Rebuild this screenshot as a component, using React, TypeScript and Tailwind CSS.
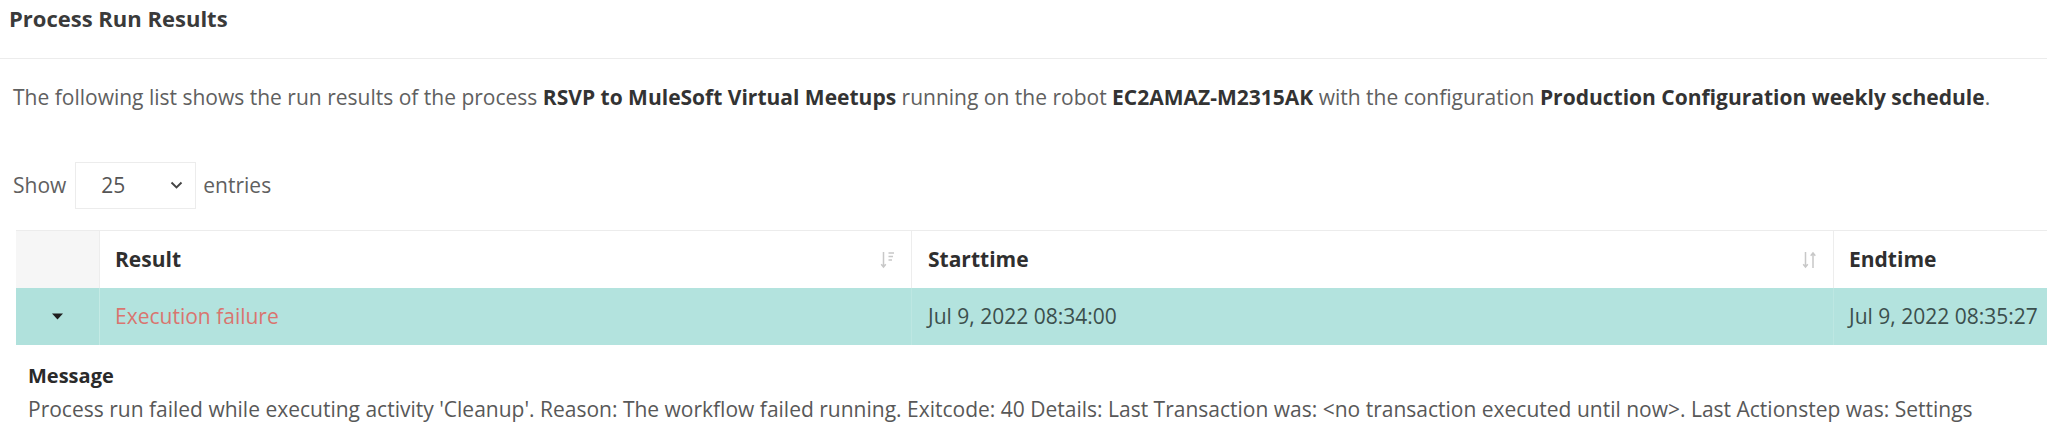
import React from "react";

function SortIconA() {
  return (
    <svg width="15" height="20" viewBox="0 0 15 20" fill="none" stroke="#c8c8c8" strokeWidth="1.5">
      <path d="M3.5 2v15M1.2 14.3 3.5 17l2.3-2.7" />
      <path d="M8.5 3h5.5M8.5 6.5h4.5M8.5 10h3.5" />
    </svg>
  );
}

function SortIconB() {
  return (
    <svg width="15" height="20" viewBox="0 0 15 20" fill="none" stroke="#c8c8c8" strokeWidth="1.5">
      <path d="M3.5 2v15M1.2 14.3 3.5 17l2.3-2.7" />
      <path d="M11 18V3M8.7 5.7 11 3l2.3 2.7" />
    </svg>
  );
}

export default function App() {
  const font = { fontFamily: '"Open Sans", "Noto Sans", sans-serif' };
  return (
    <div className="w-[2047px] h-[433px] overflow-hidden bg-white" style={font}>
      <div className="h-[59px] border-b border-[#ececec] pl-[9px] pt-[3px]">
        <h1 className="text-[22px] font-bold text-[#3a3a3a] leading-[30px]">Process Run Results</h1>
      </div>
      <div className="pl-[13px] mt-[23px] text-[21px] text-[#606060] leading-[30px] whitespace-nowrap">
        The following list shows the run results of the process{" "}
        <b className="font-bold text-[#333]">RSVP to MuleSoft Virtual Meetups</b> running on the robot{" "}
        <b className="font-bold text-[#333]">EC2AMAZ-M2315AK</b> with the configuration{" "}
        <b className="font-bold text-[#333]">Production Configuration weekly schedule</b>.
      </div>
      <div className="flex items-center pl-[13px] mt-[50px] text-[21px] text-[#606060]">
        <span>Show</span>
        <div className="ml-[9px] flex items-center w-[121px] h-[47px] border border-[#ececec] pl-[25px] pr-[12px] justify-between">
          <span className="text-[#555]">25</span>
          <svg width="13" height="9" viewBox="0 0 13 9" fill="none" stroke="#444" strokeWidth="1.9">
            <path d="M1.5 1.5 6.5 6.5l5-5" />
          </svg>
        </div>
        <span className="ml-[7px]">entries</span>
      </div>
      <div className="ml-[16px] mt-[21px]">
        <div className="flex h-[58px] border-t border-[#ececec] text-[21px] font-bold text-[#2f2f2f]">
          <div className="w-[84px] bg-[#f6f6f6] border-r border-[#ededed]" />
          <div className="w-[812px] flex items-center justify-between pl-[15px] pr-[16px] border-r border-[#ededed]">
            <span>Result</span>
            <SortIconA />
          </div>
          <div className="w-[922px] flex items-center justify-between pl-[16px] pr-[16px] border-r border-[#ededed]">
            <span>Starttime</span>
            <SortIconB />
          </div>
          <div className="flex-1 flex items-center pl-[15px]">
            <span>Endtime</span>
          </div>
        </div>
        <div className="flex h-[57px] bg-[#b3e3de] text-[21px] text-[#3b4f4d]">
          <div className="w-[84px] flex items-center justify-center border-r border-[#c4eae5] bg-[#b0e1dc]">
            <svg width="13" height="9" viewBox="0 0 13 9">
              <path d="M1 1.5h11L6.5 7.5z" fill="#1f1f1f" />
            </svg>
          </div>
          <div className="w-[812px] flex items-center pl-[15px] text-[#d9756f] border-r border-[#bde7e2]">
            Execution failure
          </div>
          <div className="w-[922px] flex items-center pl-[16px] border-r border-[#bde7e2]">Jul 9, 2022 08:34:00</div>
          <div className="flex-1 flex items-center pl-[15px]">Jul 9, 2022 08:35:27</div>
        </div>
      </div>
      <div className="pl-[28px] pt-[16px]">
        <div className="text-[20px] font-bold text-[#2a2a2a] leading-[30px]">Message</div>
        <div className="text-[21px] text-[#585858] leading-[30px] mt-[3px] whitespace-nowrap">
          Process run failed while executing activity 'Cleanup'. Reason: The workflow failed running. Exitcode: 40
          Details: Last Transaction was: &lt;no transaction executed until now&gt;. Last Actionstep was: Settings
        </div>
      </div>
    </div>
  );
}
